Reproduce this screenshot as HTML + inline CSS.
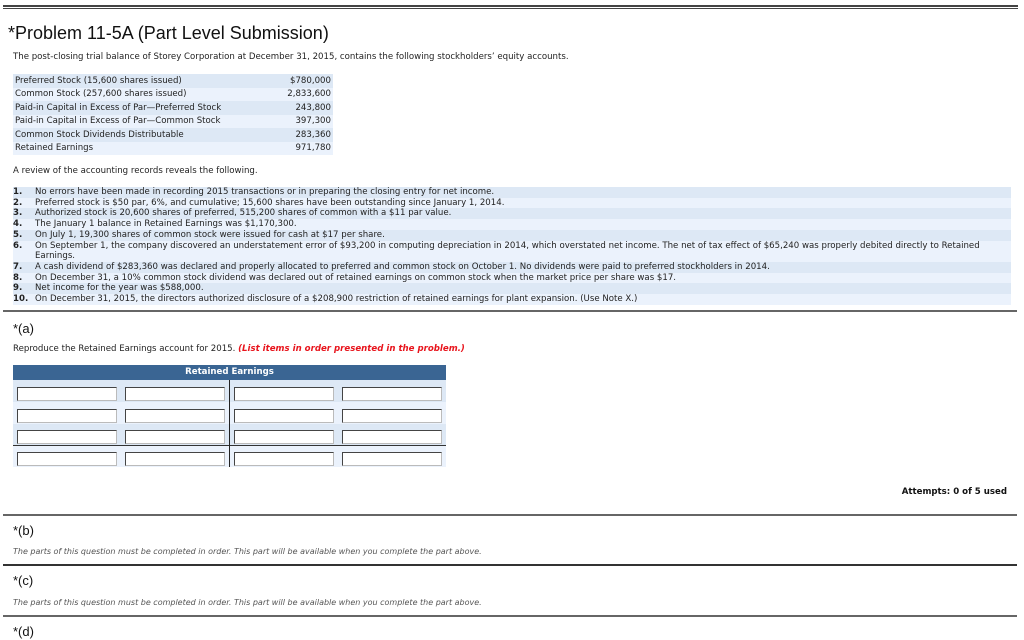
<!DOCTYPE html>
<html><head><meta charset="utf-8"><style>
*{margin:0;padding:0;box-sizing:border-box}
body{width:1024px;height:640px;overflow:hidden;background:#fff;font-family:"DejaVu Sans","Liberation Sans",sans-serif;color:#222;position:relative}
.a{position:absolute}
.s{font-size:8.6px;white-space:nowrap}
.h{font-family:"Liberation Sans",sans-serif;color:#111}
.hr{position:absolute;left:3px;width:1014px;height:2px;background:#666}
table.tb{position:absolute;left:13px;top:74px;width:320px;border-collapse:collapse;font-size:8.6px}
table.tb td{height:13.5px;padding:0 2px}
.r1{background:#dde8f5}.r2{background:#ebf2fc}
.li{position:absolute;left:13px;width:998px;font-size:8.6px;line-height:10.7px}
.li div{position:relative;padding-left:22px;white-space:nowrap}
.li b{position:absolute;left:0}
.box{position:absolute;height:14px;border:1px solid #444;border-right-color:#bbb;border-bottom-color:#bbb;background:#fff;width:100px}
.it{font-style:italic;font-size:8px;color:#555}
</style></head><body>
<div class="a" style="left:3px;top:5px;width:1015px;height:2px;background:#444"></div>
<div class="a" style="left:3px;top:8px;width:1015px;height:1px;background:#444"></div>
<div class="a h" style="left:8px;top:23px;font-size:18px">*Problem 11-5A (Part Level Submission)</div>
<div class="a s" style="left:13px;top:52px">The post-closing trial balance of Storey Corporation at December 31, 2015, contains the following stockholders’ equity accounts.</div>
<table class="tb">
<tr class="r1"><td>Preferred Stock (15,600 shares issued)</td><td align="right">$780,000</td></tr>
<tr class="r2"><td>Common Stock (257,600 shares issued)</td><td align="right">2,833,600</td></tr>
<tr class="r1"><td>Paid-in Capital in Excess of Par—Preferred Stock</td><td align="right">243,800</td></tr>
<tr class="r2"><td>Paid-in Capital in Excess of Par—Common Stock</td><td align="right">397,300</td></tr>
<tr class="r1"><td>Common Stock Dividends Distributable</td><td align="right">283,360</td></tr>
<tr class="r2"><td>Retained Earnings</td><td align="right">971,780</td></tr>
</table>
<div class="a s" style="left:13px;top:166px">A review of the accounting records reveals the following.</div>
<div class="li" style="top:187px">
<div class="r1"><b>1.</b>No errors have been made in recording 2015 transactions or in preparing the closing entry for net income.</div>
<div class="r2"><b>2.</b>Preferred stock is $50 par, 6%, and cumulative; 15,600 shares have been outstanding since January 1, 2014.</div>
<div class="r1"><b>3.</b>Authorized stock is 20,600 shares of preferred, 515,200 shares of common with a $11 par value.</div>
<div class="r2"><b>4.</b>The January 1 balance in Retained Earnings was $1,170,300.</div>
<div class="r1"><b>5.</b>On July 1, 19,300 shares of common stock were issued for cash at $17 per share.</div>
<div class="r2"><b>6.</b>On September 1, the company discovered an understatement error of $93,200 in computing depreciation in 2014, which overstated net income. The net of tax effect of $65,240 was properly debited directly to Retained<br>Earnings.</div>
<div class="r1"><b>7.</b>A cash dividend of $283,360 was declared and properly allocated to preferred and common stock on October 1. No dividends were paid to preferred stockholders in 2014.</div>
<div class="r2"><b>8.</b>On December 31, a 10% common stock dividend was declared out of retained earnings on common stock when the market price per share was $17.</div>
<div class="r1"><b>9.</b>Net income for the year was $588,000.</div>
<div class="r2"><b>10.</b>On December 31, 2015, the directors authorized disclosure of a $208,900 restriction of retained earnings for plant expansion. (Use Note X.)</div>
</div>
<div class="hr" style="top:310px"></div>
<div class="a h" style="left:13px;top:321px;font-size:13px">*(a)</div>
<div class="a s" style="left:13px;top:344px">Reproduce the Retained Earnings account for 2015. <i style="color:#e8141c;font-weight:bold">(List items in order presented in the problem.)</i></div>
<div class="a" style="left:13px;top:365px;width:433px;height:15px;background:#3a6593;color:#fff;font-size:8.6px;font-weight:bold;text-align:center;line-height:15px">Retained Earnings</div>
<div class="a r1" style="left:13px;top:380px;width:433px;height:22px"></div>
<div class="a r2" style="left:13px;top:402px;width:433px;height:22px"></div>
<div class="a r1" style="left:13px;top:424px;width:433px;height:22px"></div>
<div class="a r2" style="left:13px;top:446px;width:433px;height:21px"></div>
<div class="a" style="left:13px;top:445px;width:433px;height:1px;background:#333"></div>
<div class="a" style="left:229px;top:380px;width:1px;height:87px;background:#222"></div>
<div class="box" style="left:17px;top:387px"></div><div class="box" style="left:125px;top:387px"></div><div class="box" style="left:234px;top:387px"></div><div class="box" style="left:342px;top:387px"></div>
<div class="box" style="left:17px;top:409px"></div><div class="box" style="left:125px;top:409px"></div><div class="box" style="left:234px;top:409px"></div><div class="box" style="left:342px;top:409px"></div>
<div class="box" style="left:17px;top:430px"></div><div class="box" style="left:125px;top:430px"></div><div class="box" style="left:234px;top:430px"></div><div class="box" style="left:342px;top:430px"></div>
<div class="box" style="left:17px;top:452px"></div><div class="box" style="left:125px;top:452px"></div><div class="box" style="left:234px;top:452px"></div><div class="box" style="left:342px;top:452px"></div>
<div class="a" style="right:17px;top:487px;font-size:8.6px;font-weight:bold;color:#111">Attempts: 0 of 5 used</div>
<div class="hr" style="top:514px"></div>
<div class="a h" style="left:13px;top:523px;font-size:13px">*(b)</div>
<div class="a it" style="left:13px;top:547px">The parts of this question must be completed in order. This part will be available when you complete the part above.</div>
<div class="hr" style="top:564px;background:#333"></div>
<div class="a h" style="left:13px;top:573px;font-size:13px">*(c)</div>
<div class="a it" style="left:13px;top:598px">The parts of this question must be completed in order. This part will be available when you complete the part above.</div>
<div class="hr" style="top:615px"></div>
<div class="a h" style="left:13px;top:624px;font-size:13px">*(d)</div>
</body></html>
